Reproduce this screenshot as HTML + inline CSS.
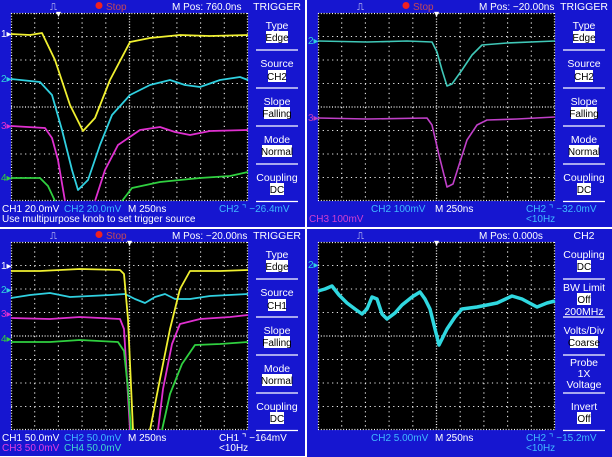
<!DOCTYPE html>
<html><head><meta charset="utf-8"><style>
html,body{margin:0;padding:0;background:#fff;}
svg{display:block;font-family:"Liberation Sans",sans-serif;}
.t{font-size:10px;fill:#fff;}
.m{font-size:10.5px;fill:#fff;text-anchor:middle;}
.v{font-size:10px;fill:#000;text-anchor:middle;}
</style></head><body>
<svg width="612" height="457" viewBox="0 0 612 457" xmlns="http://www.w3.org/2000/svg">
<defs>
<g id="grid">
  <rect x="11" y="13" width="237" height="188" fill="#000"/>
  <g stroke="#eee" stroke-width="1.1" stroke-dasharray="1.2,3.5" fill="none">
    <path d="M34.7 13V201M58.4 13V201M82.1 13V201M105.8 13V201M153.2 13V201M176.9 13V201M200.6 13V201M224.3 13V201"/>
    <path d="M11 36.5H248M11 60H248M11 83.5H248M11 130.5H248M11 154H248M11 177.5H248"/>
  </g>
  <g stroke="#fff" stroke-width="1.3" stroke-dasharray="1,1.8" fill="none">
    <path d="M129.5 13V201M11 107H248"/>
    <path d="M11 13.5H248M11 200.5H248M11.5 13V201M247.5 13V201"/>
  </g>
</g>
<g id="menuT">
  <rect x="0" y="0" width="305" height="227" fill="#1616d0"/>
  <use href="#grid"/>
  <g stroke="#fff" stroke-width="1.2"><path d="M256 50H298M256 88H298M256 126H298M256 164H298M256 201.5H298"/></g>
  <text class="m" x="277" y="10">TRIGGER</text>
  <text class="m" x="277" y="29">Type</text><rect x="266" y="31" width="22" height="12" fill="#fff"/><text class="v" x="277" y="41">Edge</text>
  <text class="m" x="277" y="67">Source</text><rect x="268" y="70" width="18" height="12" fill="#fff"/>
  <text class="m" x="277" y="105">Slope</text><rect x="264" y="107" width="26" height="12" fill="#fff"/><text class="v" x="277" y="117">Falling</text>
  <text class="m" x="277" y="143">Mode</text><rect x="262" y="145" width="30" height="12" fill="#fff"/><text class="v" x="277" y="155">Normal</text>
  <text class="m" x="277" y="181">Coupling</text><rect x="270" y="183" width="14" height="12" fill="#fff"/><text class="v" x="277" y="193">DC</text>
  <text class="t" x="50" y="10">⎍</text>
  <circle cx="99" cy="5.5" r="3.5" fill="#f02020"/>
  <text class="t" x="106" y="10" style="fill:#c04858">Stop</text>
</g>
</defs>

<g transform="translate(0,0)">
  <use href="#menuT"/>
  <text class="v" x="277" y="80">CH2</text>
  <text class="t" x="172" y="10">M Pos: 760.0ns</text>
  <text class="t" x="56" y="17" font-size="8">▾</text>
  <text class="t" x="1" y="37" font-size="7">1▸</text>
  <text class="t" x="1" y="82" font-size="7" style="fill:#30d0e0">2▸</text>
  <text class="t" x="1" y="129" font-size="7" style="fill:#e030d0">3▸</text>
  <text class="t" x="1" y="181" font-size="7" style="fill:#30d040">4▸</text>
  <g fill="none" stroke-width="1.8" stroke-linejoin="round">
    <polyline stroke="#f0f030" points="11,34 30,35 42,33 55,60 70,105 83,131 95,118 110,80 130,42 150,38 180,35 210,36 248,35"/>
    <polyline stroke="#30d0e0" points="11,79 40,82 52,95 62,130 72,170 78,190 88,180 100,145 112,115 130,95 150,85 170,80 185,85 200,87 220,80 240,77 248,80"/>
    <polyline stroke="#e030d0" points="11,126 45,128 52,138 58,160 65,201"/>
    <polyline stroke="#e030d0" points="95,201 105,170 118,145 140,130 160,127 175,132 190,135 210,131 248,130"/>
    <polyline stroke="#30d040" points="11,178 40,178 48,186 55,201"/>
    <polyline stroke="#30d040" points="122,201 132,188 160,182 200,178 230,176 248,172"/>
  </g>
  <text class="t" x="2" y="212">CH1  20.0mV</text>
  <text class="t" x="64" y="212" style="fill:#40b8ff">CH2  20.0mV</text>
  <text class="t" x="128" y="212">M 250ns</text>
  <text class="t" x="219" y="212" style="fill:#40b8ff">CH2 ⌝ −26.4mV</text>
  <text class="t" x="2" y="222">Use multipurpose knob to set trigger source</text>
</g>

<g transform="translate(307,0)">
  <use href="#menuT"/>
  <text class="v" x="277" y="80">CH2</text>
  <text class="t" x="172" y="10">M Pos: −20.00ns</text>
  <text class="t" x="127" y="17" font-size="8">▾</text>
  <text class="t" x="1" y="44" font-size="7" style="fill:#30d0e0">2▸</text>
  <text class="t" x="1" y="121" font-size="7" style="fill:#c040c0">3▸</text>
  <g fill="none" stroke-width="1.6" stroke-linejoin="round">
    <polyline stroke="#40c8b8" points="11,41 60,42 100,41 125,42 130,52 135,70 140,86 145,84 155,70 165,55 175,45 200,43 248,41"/>
    <polyline stroke="#c040c8" points="11,118 60,119 120,118 125,125 132,155 140,187 146,184 152,165 160,140 170,125 180,120 210,119 248,117"/>
  </g>
  <text class="t" x="64" y="212" style="fill:#40b8ff">CH2  100mV</text>
  <text class="t" x="128" y="212">M 250ns</text>
  <text class="t" x="219" y="212" style="fill:#40b8ff">CH2 ⌝ −32.0mV</text>
  <text class="t" x="2" y="222" style="fill:#d040d0">CH3  100mV</text>
  <text class="t" x="219" y="222" style="fill:#40b8ff">&lt;10Hz</text>
</g>

<g transform="translate(0,229)">
  <use href="#menuT"/>
  <text class="v" x="277" y="80">CH1</text>
  <text class="t" x="172" y="10">M Pos: −20.00ns</text>
  <text class="t" x="127" y="17" font-size="8">▾</text>
  <text class="t" x="1" y="40" font-size="7">1▸</text>
  <text class="t" x="1" y="64" font-size="7" style="fill:#30d0e0">2▸</text>
  <text class="t" x="1" y="88" font-size="7" style="fill:#e030d0">3▸</text>
  <text class="t" x="1" y="113" font-size="7" style="fill:#30d040">4▸</text>
  <g fill="none" stroke-width="1.8" stroke-linejoin="round">
    <polyline stroke="#30d0e0" points="11,69 30,66 50,64 70,68 90,67 110,66 125,65 135,70 145,74 155,68 165,65 175,70 190,70 210,67 248,65"/>
    <polyline stroke="#f0f030" points="11,42 40,42 80,40 120,41 124,45 128,90 133,201"/>
    <polyline stroke="#f0f030" points="150,201 160,150 170,100 180,60 190,42 220,42 248,41"/>
    <polyline stroke="#e030d0" points="11,89 50,90 80,88 120,90 124,100 127,150 130,201"/>
    <polyline stroke="#e030d0" points="158,201 163,160 172,115 180,95 200,90 230,88 248,86"/>
    <polyline stroke="#30d040" points="11,113 50,113 80,111 118,113 124,122 128,160 131,201"/>
    <polyline stroke="#30d040" points="162,201 170,165 182,135 195,116 220,115 248,113"/>
  </g>
  <text class="t" x="2" y="212">CH1  50.0mV</text>
  <text class="t" x="64" y="212" style="fill:#40b8ff">CH2  50.0mV</text>
  <text class="t" x="128" y="212">M 250ns</text>
  <text class="t" x="219" y="212">CH1 ⌝ −164mV</text>
  <text class="t" x="2" y="222" style="fill:#e040e0">CH3  50.0mV</text>
  <text class="t" x="64" y="222" style="fill:#40d8d0">CH4  50.0mV</text>
  <text class="t" x="219" y="222">&lt;10Hz</text>
</g>

<g transform="translate(307,229)">
  <rect x="0" y="0" width="305" height="228" fill="#1616d0"/>
  <use href="#grid"/>
  <g stroke="#fff" stroke-width="1.2"><path d="M256 50H298M256 88H298M256 126H298M256 164H298M256 201.5H298"/></g>
  <text class="t" x="50" y="10">⎍</text>
  <text class="t" x="172" y="10">M Pos: 0.000s</text>
  <text class="t" x="127" y="17" font-size="8">▾</text>
  <text class="m" x="277" y="10">CH2</text>
  <text class="m" x="277" y="29">Coupling</text><rect x="270" y="31" width="14" height="12" fill="#fff"/><text class="v" x="277" y="41">DC</text>
  <text class="m" x="277" y="62">BW Limit</text><rect x="270" y="64" width="14" height="12" fill="#fff"/><text class="v" x="277" y="74">Off</text>
  <text class="m" x="277" y="86">200MHz</text>
  <text class="m" x="277" y="105">Volts/Div</text><rect x="263" y="107" width="28" height="12" fill="#fff"/><text class="v" x="277" y="117">Coarse</text>
  <text class="m" x="277" y="137">Probe</text>
  <text class="m" x="277" y="148">1X</text>
  <text class="m" x="277" y="159">Voltage</text>
  <text class="m" x="277" y="181">Invert</text><rect x="270" y="183" width="14" height="12" fill="#fff"/><text class="v" x="277" y="193">Off</text>
  <text class="t" x="1" y="39" font-size="7" style="fill:#30d0e0">2▸</text>
  <polyline fill="none" stroke="#30d8e0" stroke-width="3.5" stroke-linejoin="round" points="11,62 18,60 25,57 32,66 40,74 48,80 55,85 60,80 65,68 70,70 75,85 80,90 88,84 95,76 105,68 113,63 118,70 123,80 128,100 132,116 135,110 140,100 148,88 155,80 170,78 190,74 205,67 215,70 230,78 240,74 248,72"/>
  <text class="t" x="64" y="212" style="fill:#40b8ff">CH2  5.00mV</text>
  <text class="t" x="128" y="212">M 250ns</text>
  <text class="t" x="219" y="212" style="fill:#40b8ff">CH2 ⌝ −15.2mV</text>
  <text class="t" x="219" y="222" style="fill:#40b8ff">&lt;10Hz</text>
</g>
</svg>
</body></html>
